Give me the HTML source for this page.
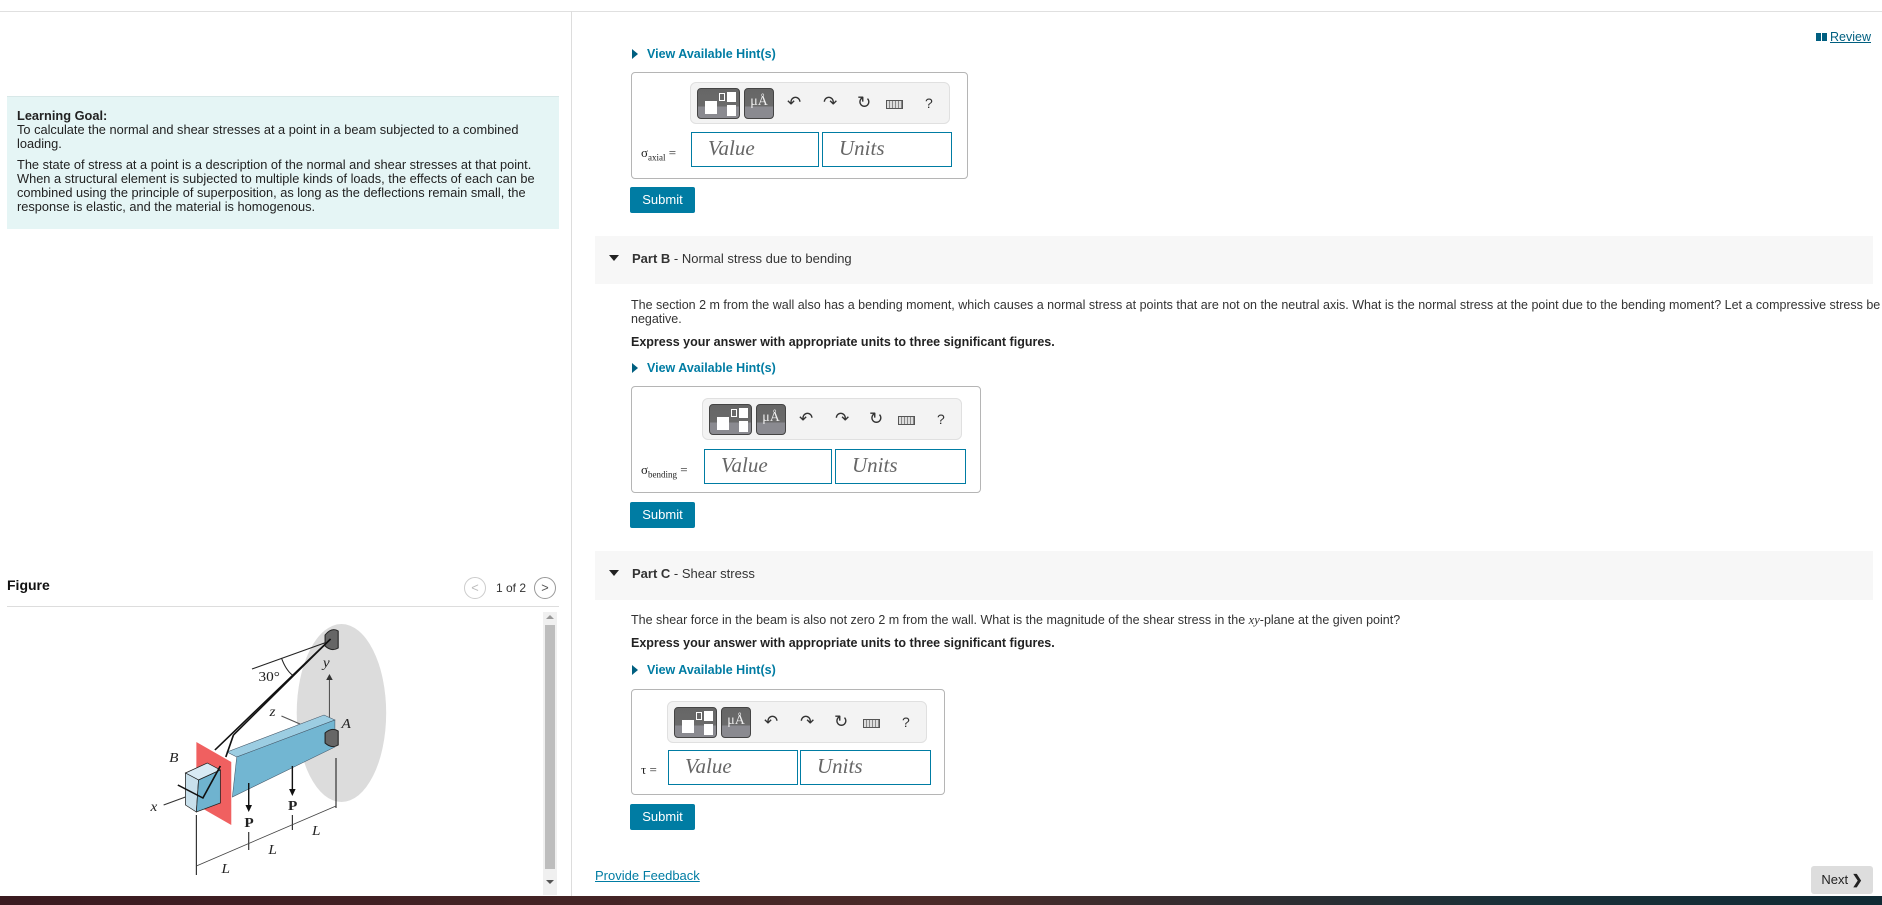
<!DOCTYPE html>
<html><head><meta charset="utf-8"><style>
*{box-sizing:border-box;margin:0;padding:0}
body{width:1882px;height:905px;position:relative;background:#fff;font-family:"Liberation Sans",Arial,sans-serif;font-size:12.8px;color:#333;overflow:hidden}
.a{position:absolute}
.hint{color:#007ca3;font-weight:bold;font-size:12.5px}
.hint:before{content:"";display:inline-block;border-left:6px solid #005f80;border-top:5px solid transparent;border-bottom:5px solid transparent;margin-right:9px;vertical-align:-1px}
.box{position:absolute;border:1px solid #b5b5b5;border-radius:4px;background:#fff}
.tb{position:absolute;background:#f3f3f3;border:1px solid #e0e0e0;border-radius:6px;width:260px;height:42px}
.b1,.b2{position:absolute;top:5px;height:31px;border:1px solid #444;border-radius:4px;background:linear-gradient(#666 0,#6a6a6a 60%,#8a8a90 60%,#8a8a90 100%)}
.b1{left:6px;width:43px}.b2{left:53px;width:30px;color:#eee;font-family:"Liberation Serif",serif;font-size:14px;text-align:center;line-height:26px}
.b1 i{position:absolute;background:#fff}
.ic{position:absolute;top:10px;font-size:17px;color:#333}
.kb{position:absolute;left:195px;top:17px;width:17px;height:9px;border:1px solid #555;background:repeating-linear-gradient(90deg,#ddd 0 2px,#888 2px 3px)}
.inp{position:absolute;border:1px solid #007ca3;height:35px;font-family:"Liberation Serif",serif;font-style:italic;font-size:21px;color:#666;padding:3px 0 0 16px}
.lbl{position:absolute;font-family:"Liberation Serif",serif;font-size:13px;color:#222}
.sub{position:absolute;background:#007ca3;color:#fff;font-size:13px;width:65px;height:26px;line-height:26px;text-align:center;border-radius:2px}
.part{position:absolute;left:595px;width:1278px;background:#f7f7f7;font-size:13px}
.part:before{content:"";position:absolute;left:14px;top:19px;border-top:6px solid #222;border-left:5px solid transparent;border-right:5px solid transparent}
p{line-height:14px}
</style></head><body>
<div class="a" style="left:0;top:11px;width:1882px;height:1px;background:#e0e0e0"></div>
<div class="a" style="left:571px;top:11px;width:1px;height:885px;background:#ddd"></div>

<div class="a" style="left:7px;top:96px;width:552px;height:133px;background:#e5f5f5;border-top:1px solid #d8e8e8;padding:12px 10px;color:#222">
<p style="width:515px"><b>Learning Goal:</b><br>To calculate the normal and shear stresses at a point in a beam subjected to a combined loading.</p>
<p style="margin-top:7px;width:525px">The state of stress at a point is a description of the normal and shear stresses at that point. When a structural element is subjected to multiple kinds of loads, the effects of each can be combined using the principle of superposition, as long as the deflections remain small, the response is elastic, and the material is homogenous.</p>
</div>

<div class="a" style="left:7px;top:577px;font-weight:bold;font-size:14px;color:#111">Figure</div>
<div class="a" style="left:464px;top:577px;width:22px;height:22px;border:1px solid #ccc;border-radius:50%;color:#bbb;text-align:center;line-height:19px">&lt;</div>
<div class="a" style="left:496px;top:581px;font-size:12px">1 of 2</div>
<div class="a" style="left:534px;top:577px;width:22px;height:22px;border:1px solid #999;border-radius:50%;color:#555;text-align:center;line-height:19px">&gt;</div>
<div class="a" style="left:7px;top:606px;width:552px;height:1px;background:#ddd"></div>
<div class="a" style="left:543px;top:612px;width:14px;height:283px;background:#f0f0f0"></div>
<div class="a" style="left:545px;top:625px;width:10px;height:244px;background:#bdbdbd"></div>
<div class="a" style="left:546px;top:615px;border-bottom:4px solid #999;border-left:4px solid transparent;border-right:4px solid transparent"></div>
<div class="a" style="left:546px;top:880px;border-top:4px solid #555;border-left:4px solid transparent;border-right:4px solid transparent"></div>

<svg class="a" style="left:0;top:0" width="570" height="905">
<g transform="scale(1.0909,1)">
<ellipse cx="313" cy="713" rx="41" ry="89" fill="#dcdcdc"/>
<line x1="231" y1="669" x2="300" y2="642" stroke="#222"/>
<path d="M258 658 Q262 670 268 675" fill="none" stroke="#222"/>
<line x1="302" y1="718" x2="302" y2="678" stroke="#555"/><path d="M299 680 L302 674 L305 680Z" fill="#333"/>
<line x1="275" y1="724" x2="258" y2="716" stroke="#555"/>
<polygon points="180,742 212,762 212,825 180,805" fill="#f06060"/>
<polygon points="208,752 297,715 307,720 217,757" fill="#9ccde2" stroke="#456" stroke-width=".5"/>
<polygon points="217,757 307,720 307,747 213,797" fill="#72b6d2" stroke="#456" stroke-width=".5"/>
<path d="M298 733 q6 -6 12 -2 v14 q-6 4 -12 -2z" fill="#666" stroke="#222"/>
<path d="M298 635 q6 -8 12 -4 v17 q-6 4 -12 -2z" fill="#666" stroke="#222"/>
<line x1="303" y1="639" x2="197" y2="750" stroke="#111" stroke-width="1.5"/>
<line x1="303" y1="639" x2="214" y2="735" stroke="#111" stroke-width="1.5"/>
<line x1="214" y1="735" x2="207" y2="757" stroke="#111" stroke-width="1.5"/>
<polygon points="170,773 190,763 202,770 182,780" fill="#d8eaf4" stroke="#222" stroke-width=".7"/>
<polygon points="170,773 182,780 180,812 170,805" fill="#c8e0ec" stroke="#222" stroke-width=".7"/>
<polygon points="182,780 202,770 202,803 180,812" fill="#6fb3cf" stroke="#222" stroke-width=".7"/>
<path d="M163 785 L186 798 L202 766" fill="none" stroke="#111" stroke-width="1.5"/>
<line x1="170" y1="797" x2="150" y2="805" stroke="#333"/>
<line x1="228" y1="783" x2="228" y2="808" stroke="#111" stroke-width="1.3"/><path d="M225 805 L228 812 L231 805Z" fill="#111"/>
<line x1="268" y1="766" x2="268" y2="792" stroke="#111" stroke-width="1.3"/><path d="M265 789 L268 796 L271 789Z" fill="#111"/>
<line x1="180" y1="815" x2="180" y2="875" stroke="#222"/>
<line x1="308" y1="758" x2="308" y2="808" stroke="#222"/>
<line x1="228" y1="832" x2="228" y2="850" stroke="#222"/>
<line x1="268" y1="815" x2="268" y2="830" stroke="#222"/>
<line x1="180" y1="866" x2="308" y2="806" stroke="#444" stroke-width=".8"/>
<g font-family="Liberation Serif,serif" font-size="14" fill="#222">
<text x="237" y="681">30°</text><text x="296" y="667" font-style="italic">y</text>
<text x="247" y="716" font-style="italic">z</text><text x="313" y="728" font-style="italic">A</text>
<text x="155" y="762" font-style="italic">B</text><text x="138" y="811" font-style="italic">x</text>
<text x="224" y="827" font-weight="bold">P</text><text x="264" y="810" font-weight="bold">P</text>
<text x="286" y="835" font-style="italic">L</text><text x="246" y="854" font-style="italic">L</text><text x="203" y="873" font-style="italic">L</text>
</g></g></svg>

<div class="a" style="left:1816px;top:30px;color:#005f80;font-size:12.5px"><span style="display:inline-block;width:11px;height:8px;background:#005f80;margin-right:3px;box-shadow:inset -5px 0 #005f80,inset -6px 0 #fff"></span><u>Review</u></div>

<!-- Part A -->
<div class="a hint" style="left:632px;top:47px">View Available Hint(s)</div>
<div class="box" style="left:631px;top:72px;width:337px;height:107px">
 <div class="tb" style="left:58px;top:9px"><div class="b1"><i style="left:7px;top:12px;width:12px;height:13px"></i><i style="left:21px;top:4px;width:6px;height:8px;background:none;border:1px solid #fff"></i><i style="left:29px;top:3px;width:9px;height:10px"></i><i style="left:29px;top:16px;width:9px;height:11px"></i></div><div class="b2">μÅ</div><span class="ic" style="left:96px">↶</span><span class="ic" style="left:132px">↷</span><span class="ic" style="left:166px">↻</span><span class="kb"></span><span class="ic" style="left:234px;font-size:14px;top:12px">?</span></div>
 <div class="lbl" style="left:9px;top:72px">σ<sub style="font-size:9px">axial</sub> =</div>
 <div class="inp" style="left:59px;top:59px;width:128px">Value</div>
 <div class="inp" style="left:190px;top:59px;width:130px">Units</div>
</div>
<div class="sub" style="left:630px;top:187px">Submit</div>

<!-- Part B -->
<div class="part" style="top:236px;height:48px;padding:15px 37px"><b>Part B</b> - Normal stress due to bending</div>
<p class="a" style="left:631px;top:298px;width:1250px;font-size:12.5px;color:#333">The section 2 m from the wall also has a bending moment, which causes a normal stress at points that are not on the neutral axis. What is the normal stress at the point due to the bending moment? Let a compressive stress be negative.</p>
<div class="a" style="left:631px;top:335px;font-weight:bold;color:#222;font-size:12.5px">Express your answer with appropriate units to three significant figures.</div>
<div class="a hint" style="left:632px;top:361px">View Available Hint(s)</div>
<div class="box" style="left:631px;top:386px;width:350px;height:107px">
 <div class="tb" style="left:70px;top:11px"><div class="b1"><i style="left:7px;top:12px;width:12px;height:13px"></i><i style="left:21px;top:4px;width:6px;height:8px;background:none;border:1px solid #fff"></i><i style="left:29px;top:3px;width:9px;height:10px"></i><i style="left:29px;top:16px;width:9px;height:11px"></i></div><div class="b2">μÅ</div><span class="ic" style="left:96px">↶</span><span class="ic" style="left:132px">↷</span><span class="ic" style="left:166px">↻</span><span class="kb"></span><span class="ic" style="left:234px;font-size:14px;top:12px">?</span></div>
 <div class="lbl" style="left:9px;top:75px">σ<sub style="font-size:9px">bending</sub> =</div>
 <div class="inp" style="left:72px;top:62px;width:128px">Value</div>
 <div class="inp" style="left:203px;top:62px;width:131px">Units</div>
</div>
<div class="sub" style="left:630px;top:502px">Submit</div>

<!-- Part C -->
<div class="part" style="top:551px;height:49px;padding:15px 37px"><b>Part C</b> - Shear stress</div>
<p class="a" style="left:631px;top:613px;font-size:12.5px">The shear force in the beam is also not zero 2 m from the wall. What is the magnitude of the shear stress in the <i style="font-family:'Liberation Serif',serif">xy</i>-plane at the given point?</p>
<div class="a" style="left:631px;top:636px;font-weight:bold;color:#222;font-size:12.5px">Express your answer with appropriate units to three significant figures.</div>
<div class="a hint" style="left:632px;top:663px">View Available Hint(s)</div>
<div class="box" style="left:631px;top:689px;width:314px;height:106px">
 <div class="tb" style="left:35px;top:11px"><div class="b1"><i style="left:7px;top:12px;width:12px;height:13px"></i><i style="left:21px;top:4px;width:6px;height:8px;background:none;border:1px solid #fff"></i><i style="left:29px;top:3px;width:9px;height:10px"></i><i style="left:29px;top:16px;width:9px;height:11px"></i></div><div class="b2">μÅ</div><span class="ic" style="left:96px">↶</span><span class="ic" style="left:132px">↷</span><span class="ic" style="left:166px">↻</span><span class="kb"></span><span class="ic" style="left:234px;font-size:14px;top:12px">?</span></div>
 <div class="lbl" style="left:9px;top:72px">τ =</div>
 <div class="inp" style="left:36px;top:60px;width:130px">Value</div>
 <div class="inp" style="left:168px;top:60px;width:131px">Units</div>
</div>
<div class="sub" style="left:630px;top:804px">Submit</div>

<div class="a" style="left:595px;top:868px;color:#007ca3;font-size:13px"><u>Provide Feedback</u></div>
<div class="a" style="left:1811px;top:866px;width:62px;height:28px;background:#ddd;border-radius:3px;text-align:center;line-height:28px;font-size:13px;color:#222">Next <b>❯</b></div>
<div class="a" style="left:0;top:896px;width:1882px;height:9px;background:linear-gradient(90deg,#3a1a20,#4a2a28 50%,#1a3038 80%,#102a34)"></div>
</body></html>
